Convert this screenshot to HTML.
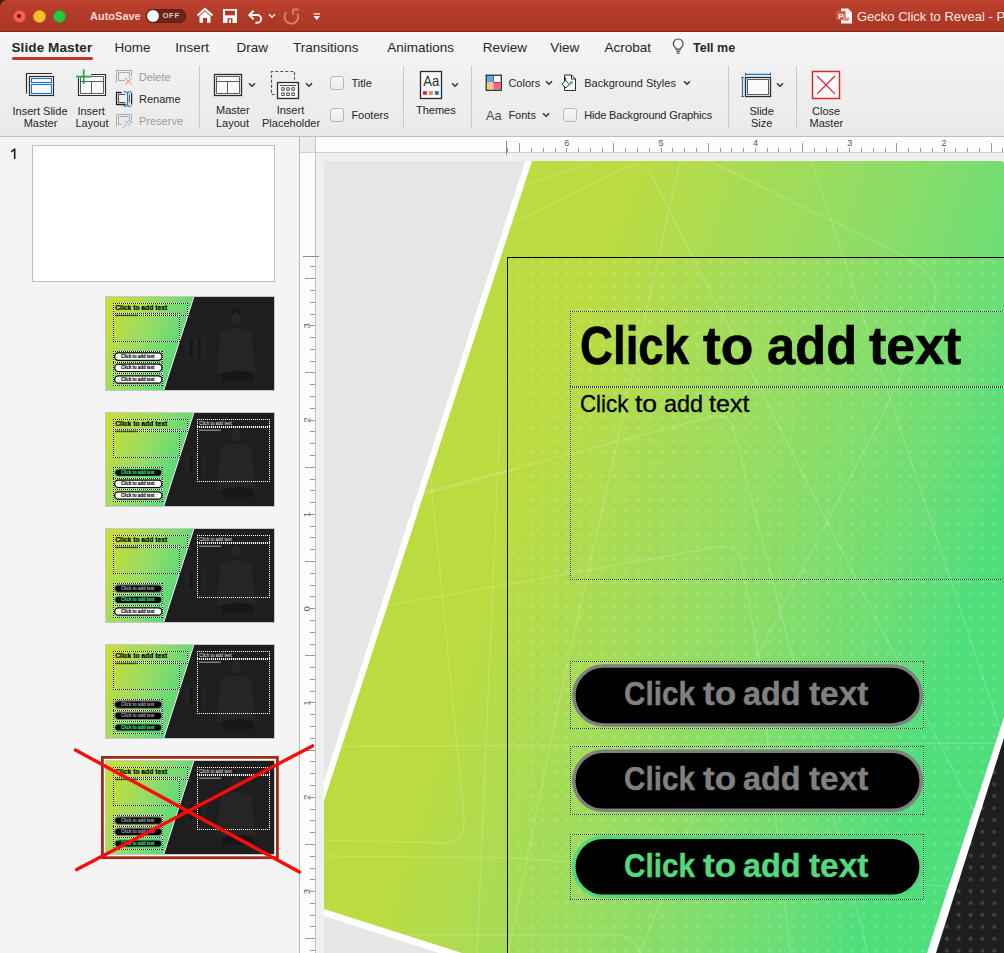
<!DOCTYPE html>
<html><head><meta charset="utf-8">
<style>
*{margin:0;padding:0;box-sizing:border-box}
html,body{width:1004px;height:953px;overflow:hidden;background:#f0f0f0;font-family:"Liberation Sans",sans-serif}
.a{position:absolute}
.t{position:absolute;white-space:nowrap;line-height:1}
svg{position:absolute;overflow:visible}
.rt{position:absolute;white-space:nowrap;line-height:1;font-size:11px;color:#262626}
.tab{position:absolute;white-space:nowrap;line-height:1;font-size:13.5px;color:#262626;top:41px}
</style></head><body>

<div class="a" style="left:0;top:0;width:1004px;height:32px;background:linear-gradient(#bc402d,#a83624);border-bottom:1px solid #8f2212"></div>
<svg style="left:0;top:0" width="8" height="8"><path d="M0 0H7A7 7 0 0 0 0 7Z" fill="#3a1a14"/></svg>
<div class="a" style="left:12.5px;top:9.5px;width:13px;height:13px;border-radius:50%;background:#fd5f57;border:0.8px solid #d9453d"></div>
<div class="a" style="left:32.5px;top:9.5px;width:13px;height:13px;border-radius:50%;background:#fdbc2e;border:0.8px solid #dc9c22"></div>
<div class="a" style="left:52.5px;top:9.5px;width:13px;height:13px;border-radius:50%;background:#27c83f;border:0.8px solid #1ca630"></div>
<div class="a" style="left:17px;top:14px;width:4px;height:4px;border-radius:50%;background:#4a0a06"></div>
<div class="t" style="left:90px;top:10.6px;font-size:11px;font-weight:bold;color:#f6d9d3">AutoSave</div>
<div class="a" style="left:146px;top:9px;width:40px;height:14px;border-radius:7px;background:#6b2419;box-shadow:inset 0 0 0 0.6px #561910"></div>
<div class="a" style="left:146.7px;top:10px;width:12px;height:12px;border-radius:50%;background:#f7f7f7;box-shadow:0 0 1px #3a0a05"></div>
<div class="t" style="left:162.4px;top:12.2px;font-size:7.8px;font-weight:bold;color:#e6c4bd;letter-spacing:0.6px;-webkit-font-smoothing:antialiased">OFF</div>
<svg style="left:196px;top:7px" width="18" height="17" viewBox="0 0 18 17"><path d="M1.6 8.6L9 1.8l7.4 6.8" fill="none" stroke="#fff" stroke-width="2"/><path d="M3.5 9.2L9 4.3l5.5 4.9V15.7H11V11H7V15.7H3.5z" fill="#fff"/></svg>
<svg style="left:222px;top:8px" width="16" height="16" viewBox="0 0 16 16"><path d="M1 1H15V15H1Z" fill="#fff"/><path d="M3 2.6H13V7.4H3Z" fill="#b63c2a"/><path d="M5.5 10.2H10.5V15H5.5Z" fill="#ad3624"/><path d="M7 11.6H9V15H7Z" fill="#fff"/></svg>
<svg style="left:247px;top:8.5px" width="18" height="15" viewBox="0 0 18 15"><path d="M2.5 6H10.2a3.9 3.9 0 0 1 0 7.8H8.4" fill="none" stroke="#fff" stroke-width="1.9"/><path d="M6.6 1.8L2.3 6l4.3 4.2" fill="none" stroke="#fff" stroke-width="1.9"/></svg>
<svg style="left:268px;top:13px" width="8" height="6" viewBox="0 0 8 6"><path d="M1 1.2l3 3 3-3" fill="none" stroke="#fff" stroke-width="1.4"/></svg>
<svg style="left:283px;top:8px" width="18" height="17" viewBox="0 0 18 17"><path d="M3.4 4.2A6.8 6.8 0 1 0 14.4 5.6" fill="none" stroke="#d8806f" stroke-width="1.9"/><path d="M10 6.6L10.3 1.5H15.6" fill="none" stroke="#d8806f" stroke-width="1.9"/></svg>
<svg style="left:312px;top:12px" width="10" height="10" viewBox="0 0 10 10"><rect x="1.5" y="1.2" width="6.5" height="1.4" fill="#f4d9d4"/><path d="M1.5 3.9h6.5L4.75 8.2z" fill="#fff"/></svg>
<svg style="left:836px;top:8px" width="17" height="16" viewBox="0 0 17 16"><path d="M5 0.5h7l4 4V15.5H5z" fill="#fbfbfb"/><path d="M12 0.5v4h4" fill="#d8d8d8"/><rect x="0.5" y="3" width="9" height="9" fill="#d35c44"/><text x="2.2" y="10.5" font-size="8" font-weight="bold" fill="#fff" font-family="Liberation Sans">P</text><path d="M10 6a3.5 3.5 0 1 0 3.5 3.5H10z" fill="#e58a74"/></svg>
<div class="t" style="left:857px;top:9.5px;font-size:13px;color:#fbe9e6">Gecko Click to Reveal - PowerPoint</div>
<div class="a" style="left:0;top:32px;width:1004px;height:105px;background:linear-gradient(#f6f6f6 0px,#f0f0f0 40px,#ebebeb 95px,#e8e8e8 104px);border-bottom:1px solid #bdbdbd"></div>
<div class="a" style="left:0;top:32px;width:1004px;height:1px;background:#fbfbfb"></div>
<div class="tab" style="left:11.5px;font-weight:bold;letter-spacing:0.1px;">Slide Master</div>
<div class="tab" style="left:114.5px;font-weight:normal;">Home</div>
<div class="tab" style="left:175.3px;font-weight:normal;">Insert</div>
<div class="tab" style="left:236.5px;font-weight:normal;">Draw</div>
<div class="tab" style="left:292.9px;font-weight:normal;">Transitions</div>
<div class="tab" style="left:387.2px;font-weight:normal;">Animations</div>
<div class="tab" style="left:482.7px;font-weight:normal;">Review</div>
<div class="tab" style="left:550.3px;font-weight:normal;">View</div>
<div class="tab" style="left:604.5px;font-weight:normal;">Acrobat</div>
<div class="tab" style="left:693.1px;font-weight:bold;transform:scaleX(0.925);transform-origin:0 0;">Tell me</div>
<div class="a" style="left:11.5px;top:57px;width:81px;height:3px;border-radius:1.5px;background:#b83b29"></div>
<svg style="left:671px;top:38px" width="14" height="17" viewBox="0 0 14 17"><path d="M5 11.2C5 9.3 2.3 8.4 2.3 5.9A4.9 4.9 0 0 1 12.1 5.9C12.1 8.4 9.4 9.3 9.4 11.2Z" fill="#f7f7f7" stroke="#454545" stroke-width="1.2"/><path d="M5.2 13.1H9.2M5.8 15.1H8.6" stroke="#454545" stroke-width="1.2"/></svg>
<svg style="left:22px;top:66px" width="40" height="34" viewBox="0 0 40 34"><path d="M4.5 27.5V7.5H30" fill="none" stroke="#2b2b2b" stroke-width="1.15"/><rect x="7.5" y="10.5" width="24" height="19" fill="#fafafa" stroke="#2b2b2b" stroke-width="1.15"/><rect x="9.5" y="12.5" width="20" height="4" fill="none" stroke="#1a73cc" stroke-width="1.1"/><rect x="9.5" y="18.5" width="20" height="9" fill="none" stroke="#1a73cc" stroke-width="1.1"/></svg>
<div class="rt" style="left:12.5px;top:105.6px;color:#262626">Insert Slide</div>
<div class="rt" style="left:23.7px;top:117.5px;color:#262626">Master</div>
<svg style="left:70px;top:66px" width="40" height="34" viewBox="0 0 40 34"><path d="M8.5 12V29.5H35.5V8.5H21" fill="#fafafa" stroke="#2b2b2b" stroke-width="1.15"/><path d="M10.5 10.5H33.5V27.5H10.5Z M10.5 15.5H33.5 M21.5 15.5V27.5" fill="none" stroke="#5c5c5c" stroke-width="1"/><path d="M13.7 3.2V18.1M6 10.6H21.5" stroke="#1ea542" stroke-width="1.6"/></svg>
<div class="rt" style="left:77.4px;top:105.6px;color:#262626">Insert</div>
<div class="rt" style="left:75.5px;top:117.5px;color:#262626">Layout</div>
<svg style="left:112px;top:66px" width="24" height="68" viewBox="0 0 24 68"><path d="M4.5 16.6V4.5H19.5V9.7" fill="none" stroke="#a9a9a9" stroke-width="1"/><path d="M12.8 14.5H6.5V6.5H17.5V12" fill="none" stroke="#a9a9a9" stroke-width="1"/><path d="M13.2 12.1L19.7 18.7M19.7 12.1L13.2 18.7" stroke="#eb9a9e" stroke-width="1.1"/><path d="M9.7 26.5H4.5V38.5H13.9" fill="none" stroke="#222" stroke-width="1.3"/><path d="M13.3 28.5H6.5V36.5H13.3" fill="none" stroke="#555" stroke-width="1"/><path d="M17.5 28.5V36.5" stroke="#555" stroke-width="1"/><path d="M19.6 27V38.5" stroke="#222" stroke-width="1.2"/><path d="M15.6 26.2V39.8M11.6 25.8Q15.6 25.4 15.6 27.6Q15.6 25.4 19.6 25.8M11.6 40.2Q15.6 40.6 15.6 38.4Q15.6 40.6 19.6 40.2" fill="none" stroke="#1a73cc" stroke-width="1.2"/><path d="M4.5 60.9V48.5H19.5V53.7" fill="none" stroke="#a9a9a9" stroke-width="1"/><path d="M10 58.5H6.5V50.5H17.5V53" fill="none" stroke="#a9a9a9" stroke-width="1"/><path d="M10.4 62.3L14.2 58.5M12.8 54.8L18.3 60.3M14.6 56.6L17.3 53.9L19.4 56L16.6 58.6M16.8 52.8L20.6 56.6" fill="none" stroke="#9cc6ea" stroke-width="1.1"/></svg>
<div class="rt" style="left:138.8px;top:72.0px;color:#9d9d9d">Delete</div>
<div class="rt" style="left:139px;top:94.0px;color:#262626">Rename</div>
<div class="rt" style="left:139px;top:116.0px;color:#9d9d9d">Preserve</div>
<div class="a" style="left:199px;top:66px;width:1px;height:62px;background:#c9c9c9"></div>
<svg style="left:208px;top:66px" width="40" height="34" viewBox="0 0 40 34"><rect x="6.5" y="8.5" width="27" height="21" fill="#fafafa" stroke="#2b2b2b" stroke-width="1.3"/><path d="M8.5 10.5H31.5V27.5H8.5Z M8.5 15.5H31.5 M19.5 15.5V27.5" fill="none" stroke="#5c5c5c" stroke-width="1"/></svg>
<svg style="left:248px;top:82px" width="8" height="6" viewBox="0 0 8 6"><path d="M1 1.2l3 3 3-3" fill="none" stroke="#333" stroke-width="1.5"/></svg>
<div class="rt" style="left:216px;top:105.4px;color:#262626">Master</div>
<div class="rt" style="left:216px;top:117.8px;color:#262626">Layout</div>
<svg style="left:265px;top:66px" width="40" height="36" viewBox="0 0 40 36"><path d="M9.7 28.5H6.5V5.5H29.5V13.5" fill="none" stroke="#505050" stroke-width="1.15" stroke-dasharray="3 2"/><rect x="12.5" y="16.5" width="21" height="16" fill="#fafafa" stroke="#2b2b2b" stroke-width="1.3"/><path d="M15 19.5H31" stroke="#505050" stroke-width="1"/><path d="M16.7 21.7h2.6v2.6h-2.6zM21.7 21.7h2.6v2.6h-2.6zM26.8 21.7h2.6v2.6h-2.6zM16.7 26.9h2.6v2.6h-2.6zM21.7 26.9h2.6v2.6h-2.6zM26.8 26.9h2.6v2.6h-2.6z" fill="none" stroke="#505050" stroke-width="1"/></svg>
<svg style="left:305px;top:82px" width="8" height="6" viewBox="0 0 8 6"><path d="M1 1.2l3 3 3-3" fill="none" stroke="#333" stroke-width="1.5"/></svg>
<div class="rt" style="left:276.7px;top:105.4px;color:#262626">Insert</div>
<div class="rt" style="left:262px;top:117.8px;color:#262626">Placeholder</div>
<div class="a" style="left:330px;top:76px;width:14px;height:14px;border-radius:3px;background:linear-gradient(#f8f8f8,#ececec);border:1px solid #b8b8b8"></div>
<div class="rt" style="left:351.4px;top:78.3px;color:#262626">Title</div>
<div class="a" style="left:330px;top:108px;width:14px;height:14px;border-radius:3px;background:linear-gradient(#f8f8f8,#ececec);border:1px solid #b8b8b8"></div>
<div class="rt" style="left:351.4px;top:110.2px;color:#262626">Footers</div>
<div class="a" style="left:402.7px;top:66px;width:1px;height:62px;background:#c9c9c9"></div>
<svg style="left:412px;top:66px" width="40" height="36" viewBox="0 0 40 36"><rect x="8.5" y="5.5" width="21" height="27" fill="#fafafa" stroke="#2b2b2b" stroke-width="1.3"/><text x="11.2" y="19.7" font-size="14.8" fill="#2b2b2b" font-family="Liberation Sans" textLength="16" lengthAdjust="spacingAndGlyphs">Aa</text><rect x="11.1" y="25.1" width="3.7" height="3.7" fill="#e0202a"/><rect x="17.1" y="25.1" width="3.7" height="3.7" fill="#f5862a"/><rect x="23" y="25.1" width="3.7" height="3.7" fill="#1b74c8"/></svg>
<svg style="left:451px;top:82px" width="8" height="6" viewBox="0 0 8 6"><path d="M1 1.2l3 3 3-3" fill="none" stroke="#333" stroke-width="1.5"/></svg>
<div class="rt" style="left:416px;top:105.4px;color:#262626">Themes</div>
<div class="a" style="left:471px;top:66px;width:1px;height:62px;background:#c9c9c9"></div>
<svg style="left:485px;top:74px" width="18" height="18" viewBox="0 0 18 18"><rect x="1.5" y="1.5" width="7" height="7" fill="#60a6e4"/><rect x="8.5" y="1.5" width="7" height="7" fill="#fafafa"/><rect x="1.5" y="8.5" width="7" height="7" fill="#f6cf7c"/><rect x="8.5" y="8.5" width="7" height="7" fill="#f06478"/><path d="M8.5 1.5V8.5" stroke="#1e5fb0" stroke-width="0.9"/><path d="M8.5 8.5H15.5" stroke="#d81f2a" stroke-width="0.9"/><rect x="1.2" y="1.2" width="15.1" height="15.1" fill="none" stroke="#222" stroke-width="1.2"/></svg>
<div class="rt" style="left:508.4px;top:77.8px;color:#262626">Colors</div>
<svg style="left:545px;top:80px" width="8" height="6" viewBox="0 0 8 6"><path d="M1 1.2l3 3 3-3" fill="none" stroke="#333" stroke-width="1.5"/></svg>
<svg style="left:561px;top:74px" width="17" height="18" viewBox="0 0 17 18"><path d="M3.5 1H10.5L14.5 5V16.5H3.5V13 M3.5 7V1" fill="#fbfbfb" stroke="#2b2b2b" stroke-width="1"/><path d="M10.5 1V5H14.5" fill="none" stroke="#2b2b2b" stroke-width="1"/><path d="M1 10.2L4.6 6.6L8.4 10.4L4.8 14z" fill="#fff" stroke="#2b2b2b" stroke-width="1"/><path d="M4.6 6.6V3.6" stroke="#2b2b2b" stroke-width="1"/><path d="M8 11.5L11 7.6M11 7.6L8.8 8.2M11 7.6L11.2 9.8" stroke="#2f87dc" stroke-width="1.1" fill="none"/></svg>
<div class="rt" style="left:584.2px;top:77.8px;color:#262626">Background Styles</div>
<svg style="left:683px;top:80px" width="8" height="6" viewBox="0 0 8 6"><path d="M1 1.2l3 3 3-3" fill="none" stroke="#333" stroke-width="1.5"/></svg>
<svg style="left:480px;top:100px" width="30" height="25"><text x="6" y="19.7" font-size="13.5" fill="#4a4a4a" font-family="Liberation Sans" textLength="15.5" lengthAdjust="spacingAndGlyphs">Aa</text></svg>
<div class="rt" style="left:508.4px;top:110.2px;color:#262626">Fonts</div>
<svg style="left:541.5px;top:112px" width="8" height="6" viewBox="0 0 8 6"><path d="M1 1.2l3 3 3-3" fill="none" stroke="#333" stroke-width="1.5"/></svg>
<div class="a" style="left:563px;top:108px;width:14px;height:14px;border-radius:3px;background:linear-gradient(#f8f8f8,#ececec);border:1px solid #b8b8b8"></div>
<div class="rt" style="left:584.2px;top:110.2px;letter-spacing:-0.15px">Hide Background Graphics</div>
<div class="a" style="left:728px;top:66px;width:1px;height:62px;background:#c9c9c9"></div>
<svg style="left:736px;top:66px" width="40" height="34" viewBox="0 0 40 34"><rect x="9.5" y="11.5" width="25" height="19" fill="#fafafa" stroke="#2b2b2b" stroke-width="1.3"/><rect x="11.5" y="13.5" width="21" height="15" fill="none" stroke="#5c5c5c" stroke-width="1"/><path d="M9.5 8.3H34.5M9.5 6.8V9.8M34.5 6.8V9.8M6.5 11.5V30.5M5 11.5H8M5 30.5H8" stroke="#1a73cc" stroke-width="1.2" fill="none"/></svg>
<svg style="left:776px;top:82px" width="8" height="6" viewBox="0 0 8 6"><path d="M1 1.2l3 3 3-3" fill="none" stroke="#333" stroke-width="1.5"/></svg>
<div class="rt" style="left:749.4px;top:106.0px;color:#262626">Slide</div>
<div class="rt" style="left:750.9px;top:118.2px;color:#262626">Size</div>
<div class="a" style="left:796.3px;top:66px;width:1px;height:62px;background:#c9c9c9"></div>
<svg style="left:811px;top:70px" width="30" height="30" viewBox="0 0 30 30"><rect x="1.5" y="1.5" width="27" height="27" fill="#fbfbfb" stroke="#e0282e" stroke-width="1.5"/><path d="M6.2 6L23.9 23.9M23.9 6L6.2 23.9" stroke="#e0282e" stroke-width="1.3"/></svg>
<div class="rt" style="left:812px;top:106.0px;color:#262626">Close</div>
<div class="rt" style="left:809.6px;top:118.2px;color:#262626">Master</div>
<div class="a" style="left:0;top:137px;width:299px;height:816px;background:#f4f4f4"></div>
<div class="a" style="left:299px;top:137px;width:1px;height:816px;background:#b8b8b8"></div>
<div class="a" style="left:300px;top:137px;width:15px;height:15px;background:linear-gradient(135deg,#f0f0f0,#e9e9e9)"></div>
<div class="a" style="left:315px;top:137px;width:689px;height:15px;background:#fcfcfc;border-left:1px solid #b8b8b8"></div>
<div class="a" style="left:300px;top:152px;width:704px;height:1px;background:#cfcfcf"></div>
<div class="a" style="left:300px;top:153px;width:15px;height:800px;background:#fcfcfc"></div>
<div class="a" style="left:315px;top:137px;width:1px;height:816px;background:#c4c4c4"></div>
<svg style="left:0;top:0" width="1004" height="953"><path d="M507.5 148V152 M519.5 143V152 M531.5 148V152 M543.5 148V152 M555.5 148V152 M566.5 148V152 M578.5 148V152 M590.5 148V152 M602.5 148V152 M613.5 143V152 M625.5 148V152 M637.5 148V152 M649.5 148V152 M661.5 148V152 M672.5 148V152 M684.5 148V152 M696.5 148V152 M708.5 143V152 M720.5 148V152 M731.5 148V152 M743.5 148V152 M755.5 148V152 M767.5 148V152 M778.5 148V152 M790.5 148V152 M802.5 143V152 M814.5 148V152 M826.5 148V152 M837.5 148V152 M849.5 148V152 M861.5 148V152 M873.5 148V152 M885.5 148V152 M896.5 143V152 M908.5 148V152 M920.5 148V152 M932.5 148V152 M944.5 148V152 M955.5 148V152 M967.5 148V152 M979.5 148V152 M991.5 143V152 M1002.5 148V152" stroke="#9a9a9a" stroke-width="1"/><path d="M506.5 141V155" stroke="#8a8a8a" stroke-width="1"/></svg>
<div class="t" style="left:564.3px;top:139px;font-size:9px;color:#555">6</div>
<div class="t" style="left:658.6px;top:139px;font-size:9px;color:#555">5</div>
<div class="t" style="left:752.9px;top:139px;font-size:9px;color:#555">4</div>
<div class="t" style="left:847.2px;top:139px;font-size:9px;color:#555">3</div>
<div class="t" style="left:941.5px;top:139px;font-size:9px;color:#555">2</div>
<svg style="left:0;top:0" width="1004" height="953"><path d="M310 266.5H315 M305 278.5H315 M310 290.5H315 M310 302.5H315 M310 314.5H315 M310 325.5H315 M310 337.5H315 M310 349.5H315 M310 361.5H315 M305 372.5H315 M310 384.5H315 M310 396.5H315 M310 408.5H315 M310 420.5H315 M310 431.5H315 M310 443.5H315 M310 455.5H315 M305 467.5H315 M310 479.5H315 M310 490.5H315 M310 502.5H315 M310 514.5H315 M310 526.5H315 M310 537.5H315 M310 549.5H315 M305 561.5H315 M310 573.5H315 M310 585.5H315 M310 596.5H315 M310 608.5H315 M310 620.5H315 M310 632.5H315 M310 644.5H315 M305 655.5H315 M310 667.5H315 M310 679.5H315 M310 691.5H315 M310 702.5H315 M310 714.5H315 M310 726.5H315 M310 738.5H315 M305 750.5H315 M310 761.5H315 M310 773.5H315 M310 785.5H315 M310 797.5H315 M310 809.5H315 M310 820.5H315 M310 832.5H315 M305 844.5H315 M310 856.5H315 M310 868.5H315 M310 879.5H315 M310 891.5H315 M310 903.5H315 M310 915.5H315 M310 926.5H315 M305 938.5H315 M310 950.5H315" stroke="#9a9a9a" stroke-width="1"/><path d="M303 256.5H319" stroke="#8a8a8a" stroke-width="1"/></svg>
<svg style="left:0;top:0" width="1004" height="953"><text transform="translate(309.6 325.8) rotate(-90)" text-anchor="middle" font-size="9" fill="#555" font-family="Liberation Sans">3</text><text transform="translate(309.6 420.1) rotate(-90)" text-anchor="middle" font-size="9" fill="#555" font-family="Liberation Sans">2</text><text transform="translate(309.6 514.4) rotate(-90)" text-anchor="middle" font-size="9" fill="#555" font-family="Liberation Sans">1</text><text transform="translate(309.6 608.7) rotate(-90)" text-anchor="middle" font-size="9" fill="#555" font-family="Liberation Sans">0</text><text transform="translate(309.6 703.0) rotate(-90)" text-anchor="middle" font-size="9" fill="#555" font-family="Liberation Sans">1</text><text transform="translate(309.6 797.3) rotate(-90)" text-anchor="middle" font-size="9" fill="#555" font-family="Liberation Sans">2</text><text transform="translate(309.6 891.6) rotate(-90)" text-anchor="middle" font-size="9" fill="#555" font-family="Liberation Sans">3</text></svg>
<div class="a" style="left:324px;top:161px;width:680px;height:792px;background:#e6e6e6"></div>
<svg style="left:0;top:0" width="1004" height="953" viewBox="0 0 1004 953"><defs><linearGradient id="g1" gradientUnits="userSpaceOnUse" x1="629" y1="161" x2="1068" y2="309" color-interpolation="linearRGB"><stop offset="0" stop-color="#bbdb40"/><stop offset="1" stop-color="#4fde7c"/></linearGradient><pattern id="dotsL" x="513.6" y="256.2" width="11.87" height="11.87" patternUnits="userSpaceOnUse"><circle cx="5.935" cy="5.935" r="1.9" fill="#ffffff" fill-opacity="0.135"/></pattern><pattern id="dotsD" x="513.6" y="256.2" width="11.87" height="11.87" patternUnits="userSpaceOnUse"><circle cx="5.935" cy="5.935" r="1.9" fill="#ffffff" fill-opacity="0.035"/></pattern><clipPath id="clipR"><rect x="507" y="257" width="500" height="700"/></clipPath></defs><path d="M525.4 161H1004V953H439L324 916V781Z" fill="#ffffff"/><path d="M532 161H1001L1004 162.5V953H462L324 909V801Z" fill="url(#g1)"/><clipPath id="clipG"><path d="M532 161H1001L1004 162.5V953H462L324 909V801Z"/></clipPath><g fill="none" stroke="#ffffff" stroke-opacity="0.17" stroke-width="1.4" clip-path="url(#clipG)"><path d="M524.6 185.4L600 160"/><path d="M505 227L625 168Q640 161 650 172L896.4 658.2L1004 870"/><path d="M680 161L555 720L508 953"/><path d="M709.8 161L904.6 256.6Q940 275 935.6 300L880 420L756 658.2L640 953"/><path d="M811.3 161L1004 740"/><path d="M395 500L707 418Q728 410 734 430L868 953"/><path d="M380.8 606.8L718 547Q740 543 742 565L759.4 661.6L790 953"/><path d="M425.6 493.7L520 468"/><path d="M425 420L464 816Q466 843 446 843L324 840"/><path d="M500 420L477 953"/><path d="M324 746.5L1004 743"/><path d="M326 856L508 857.7L1004 890"/><path d="M324 934.7L617.6 934.7Q634 936 640 953"/></g><path d="M927 953L1004 717V953Z" fill="#ffffff"/><path d="M936 953L1004 738V953Z" fill="#1e1e1e"/><g clip-path="url(#clipR)"><path d="M532 161H1004V953H462L324 909V801Z" fill="url(#dotsL)"/><path d="M936 953L1004 738V953Z" fill="url(#dotsD)"/></g><path d="M507.5 1000V257.5H1010" fill="none" stroke="#000" stroke-width="1"/><path d="M570 311.5H1011 M570 386.5H1011 M570.5 311V387 M1010.5 311V387" fill="none" stroke="#ffffff" stroke-opacity="0.6" stroke-width="1"/><path d="M570 311.5H1011 M570 386.5H1011 M570.5 311V387 M1010.5 311V387" fill="none" stroke="#333333" stroke-width="1" stroke-dasharray="1 1"/><path d="M570 387.5H1011 M570 579.5H1011 M570.5 387V580 M1010.5 387V580" fill="none" stroke="#ffffff" stroke-opacity="0.6" stroke-width="1"/><path d="M570 387.5H1011 M570 579.5H1011 M570.5 387V580 M1010.5 387V580" fill="none" stroke="#333333" stroke-width="1" stroke-dasharray="1 1"/><path d="M570 661.5H924 M570 728.5H924 M570.5 661V729 M923.5 661V729" fill="none" stroke="#ffffff" stroke-opacity="0.6" stroke-width="1"/><path d="M570 661.5H924 M570 728.5H924 M570.5 661V729 M923.5 661V729" fill="none" stroke="#333333" stroke-width="1" stroke-dasharray="1 1"/><path d="M570 746.5H924 M570 814.5H924 M570.5 746V815 M923.5 746V815" fill="none" stroke="#ffffff" stroke-opacity="0.6" stroke-width="1"/><path d="M570 746.5H924 M570 814.5H924 M570.5 746V815 M923.5 746V815" fill="none" stroke="#333333" stroke-width="1" stroke-dasharray="1 1"/><path d="M570 834.5H924 M570 899.5H924 M570.5 834V900 M923.5 834V900" fill="none" stroke="#ffffff" stroke-opacity="0.6" stroke-width="1"/><path d="M570 834.5H924 M570 899.5H924 M570.5 834V900 M923.5 834V900" fill="none" stroke="#333333" stroke-width="1" stroke-dasharray="1 1"/><rect x="573.8" y="666" width="347.4000000000001" height="59" rx="29.5" fill="#000" stroke="#808080" stroke-width="3.5"/><rect x="573.8" y="751.2" width="347.4000000000001" height="59.09999999999991" rx="29.549999999999955" fill="#000" stroke="#808080" stroke-width="3.5"/><rect x="573.8" y="837.2" width="347.4000000000001" height="59.09999999999991" rx="29.549999999999955" fill="#000" stroke="#4fd97c" stroke-width="3.5"/></svg>
<div class="t" style="left:579.77px;top:319.19px;font-size:53.40px;font-weight:bold;color:#000;transform:scaleX(0.8552);transform-origin:0 0;-webkit-text-stroke:0.64px #000;">Click</div>
<div class="t" style="left:702.57px;top:319.19px;font-size:53.40px;font-weight:bold;color:#000;transform:scaleX(0.9996);transform-origin:0 0;-webkit-text-stroke:0.64px #000;">to</div>
<div class="t" style="left:766.69px;top:319.19px;font-size:53.40px;font-weight:bold;color:#000;transform:scaleX(0.9501);transform-origin:0 0;-webkit-text-stroke:0.64px #000;">add</div>
<div class="t" style="left:869.08px;top:319.19px;font-size:53.40px;font-weight:bold;color:#000;transform:scaleX(0.9717);transform-origin:0 0;-webkit-text-stroke:0.64px #000;">text</div>
<div class="t" style="left:580.18px;top:393.06px;font-size:23.20px;font-weight:normal;color:#000;transform:scaleX(0.9628);transform-origin:0 0;-webkit-text-stroke:0.3px #000;">Click</div>
<div class="t" style="left:634.93px;top:393.06px;font-size:23.20px;font-weight:normal;color:#000;transform:scaleX(1.1435);transform-origin:0 0;-webkit-text-stroke:0.3px #000;">to</div>
<div class="t" style="left:663.56px;top:393.06px;font-size:23.20px;font-weight:normal;color:#000;transform:scaleX(1.0088);transform-origin:0 0;-webkit-text-stroke:0.3px #000;">add</div>
<div class="t" style="left:709.05px;top:393.06px;font-size:23.20px;font-weight:normal;color:#000;transform:scaleX(1.0830);transform-origin:0 0;-webkit-text-stroke:0.3px #000;">text</div>
<div class="t" style="left:623.71px;top:676.85px;font-size:33.60px;font-weight:bold;color:#808080;transform:scaleX(0.8838);transform-origin:0 0;-webkit-text-stroke:0.40px #808080;">Click</div>
<div class="t" style="left:702.55px;top:676.85px;font-size:33.60px;font-weight:bold;color:#808080;transform:scaleX(1.0448);transform-origin:0 0;-webkit-text-stroke:0.40px #808080;">to</div>
<div class="t" style="left:743.05px;top:676.85px;font-size:33.60px;font-weight:bold;color:#808080;transform:scaleX(0.9646);transform-origin:0 0;-webkit-text-stroke:0.40px #808080;">add</div>
<div class="t" style="left:808.77px;top:676.85px;font-size:33.60px;font-weight:bold;color:#808080;transform:scaleX(0.9930);transform-origin:0 0;-webkit-text-stroke:0.40px #808080;">text</div>
<div class="t" style="left:623.71px;top:762.45px;font-size:33.60px;font-weight:bold;color:#808080;transform:scaleX(0.8838);transform-origin:0 0;-webkit-text-stroke:0.40px #808080;">Click</div>
<div class="t" style="left:702.55px;top:762.45px;font-size:33.60px;font-weight:bold;color:#808080;transform:scaleX(1.0448);transform-origin:0 0;-webkit-text-stroke:0.40px #808080;">to</div>
<div class="t" style="left:743.05px;top:762.45px;font-size:33.60px;font-weight:bold;color:#808080;transform:scaleX(0.9646);transform-origin:0 0;-webkit-text-stroke:0.40px #808080;">add</div>
<div class="t" style="left:808.77px;top:762.45px;font-size:33.60px;font-weight:bold;color:#808080;transform:scaleX(0.9930);transform-origin:0 0;-webkit-text-stroke:0.40px #808080;">text</div>
<div class="t" style="left:623.71px;top:849.35px;font-size:33.60px;font-weight:bold;color:#52d97c;transform:scaleX(0.8838);transform-origin:0 0;-webkit-text-stroke:0.40px #52d97c;">Click</div>
<div class="t" style="left:702.55px;top:849.35px;font-size:33.60px;font-weight:bold;color:#52d97c;transform:scaleX(1.0448);transform-origin:0 0;-webkit-text-stroke:0.40px #52d97c;">to</div>
<div class="t" style="left:743.05px;top:849.35px;font-size:33.60px;font-weight:bold;color:#52d97c;transform:scaleX(0.9646);transform-origin:0 0;-webkit-text-stroke:0.40px #52d97c;">add</div>
<div class="t" style="left:808.77px;top:849.35px;font-size:33.60px;font-weight:bold;color:#52d97c;transform:scaleX(0.9930);transform-origin:0 0;-webkit-text-stroke:0.40px #52d97c;">text</div>
<svg style="left:0;top:0" width="1004" height="953" viewBox="0 0 1004 953"><defs><linearGradient id="tg" x1="4" y1="20" x2="82" y2="52" gradientUnits="userSpaceOnUse"><stop offset="0" stop-color="#c5dd39"/><stop offset="0.5" stop-color="#95dc66"/><stop offset="1" stop-color="#4ed97c"/></linearGradient></defs><rect x="32.5" y="145.5" width="242" height="136" fill="#ffffff" stroke="#bdbdbd" stroke-width="1"/><g transform="translate(105,296)"><rect x="0.5" y="0.5" width="169" height="94" fill="#1e1e1e" stroke="#c8c8c8" stroke-width="1"/><path d="M116 35q15-6 30 0l5 43h-40z" fill="#252525"/><ellipse cx="131" cy="23" rx="4.6" ry="6.2" fill="#262626"/><path d="M126 19q5-8.5 10 0v-3.5q-5-5.5-10 0z" fill="#131313"/><path d="M117 77q14-4 32 0v8h-32z" fill="#171717"/><path d="M80 42h22v22h-22z" fill="#222"/><path d="M84 44h4v18h-4zM93 43h3v20h-3z" fill="#181818"/><path d="M1 1H88.5L58.5 94H1Z" fill="url(#tg)"/><path d="M88.8 1L58.8 94" stroke="#ffffff" stroke-width="1"/><path d="M8 7.5H83 M8 19.5H83 M8.5 7V20 M82.5 7V20" fill="none" stroke="#ffffff" stroke-width="1"/><path d="M8 7.5H83 M8 19.5H83 M8.5 7V20 M82.5 7V20" fill="none" stroke="#1a1a1a" stroke-width="1" stroke-dasharray="1 1"/><path d="M8 17.5H75 M8 45.5H75 M8.5 17V46 M74.5 17V46" fill="none" stroke="#ffffff" stroke-width="1"/><path d="M8 17.5H75 M8 45.5H75 M8.5 17V46 M74.5 17V46" fill="none" stroke="#1a1a1a" stroke-width="1" stroke-dasharray="1 1"/><text x="10.2" y="14.2" font-family="Liberation Sans" font-weight="bold" font-size="7.4" textLength="52" lengthAdjust="spacingAndGlyphs" fill="#000" stroke="#000" stroke-width="0.2">Click to add text</text><rect x="10" y="18.6" width="23" height="1.6" fill="#222" opacity="0.7"/><path d="M8 55.5H58 M8 89.5H58 M8.5 55V90 M57.5 55V90" fill="none" stroke="#ffffff" stroke-width="1"/><path d="M8 55.5H58 M8 89.5H58 M8.5 55V90 M57.5 55V90" fill="none" stroke="#1a1a1a" stroke-width="1" stroke-dasharray="1 1"/><path d="M8 66.5H58M8 77.5H58" fill="none" stroke="#ffffff" stroke-width="1"/><path d="M8 66.5H58M8 77.5H58" fill="none" stroke="#1a1a1a" stroke-width="1" stroke-dasharray="1 1"/><rect x="9.7" y="56.9" width="47.3" height="7.4" rx="3.7" fill="#ffffff" stroke="#000" stroke-width="1.2"/><text x="16" y="62.1" font-family="Liberation Sans" font-weight="bold" font-size="5.4" textLength="33.5" lengthAdjust="spacingAndGlyphs" fill="#000" stroke="#000" stroke-width="0.15">Click to add text</text><rect x="9.7" y="68.10000000000001" width="47.3" height="7.4" rx="3.7" fill="#ffffff" stroke="#000" stroke-width="1.2"/><text x="16" y="73.3" font-family="Liberation Sans" font-weight="bold" font-size="5.4" textLength="33.5" lengthAdjust="spacingAndGlyphs" fill="#000" stroke="#000" stroke-width="0.15">Click to add text</text><rect x="9.7" y="79.80000000000001" width="47.3" height="7.4" rx="3.7" fill="#ffffff" stroke="#000" stroke-width="1.2"/><text x="16" y="85.0" font-family="Liberation Sans" font-weight="bold" font-size="5.4" textLength="33.5" lengthAdjust="spacingAndGlyphs" fill="#000" stroke="#000" stroke-width="0.15">Click to add text</text></g><g transform="translate(105,412)"><rect x="0.5" y="0.5" width="169" height="94" fill="#1e1e1e" stroke="#c8c8c8" stroke-width="1"/><path d="M116 35q15-6 30 0l5 43h-40z" fill="#252525"/><ellipse cx="131" cy="23" rx="4.6" ry="6.2" fill="#262626"/><path d="M126 19q5-8.5 10 0v-3.5q-5-5.5-10 0z" fill="#131313"/><path d="M117 77q14-4 32 0v8h-32z" fill="#171717"/><path d="M80 42h22v22h-22z" fill="#222"/><path d="M84 44h4v18h-4zM93 43h3v20h-3z" fill="#181818"/><path d="M1 1H88.5L58.5 94H1Z" fill="url(#tg)"/><path d="M88.8 1L58.8 94" stroke="#ffffff" stroke-width="1"/><path d="M8 7.5H83 M8 19.5H83 M8.5 7V20 M82.5 7V20" fill="none" stroke="#ffffff" stroke-width="1"/><path d="M8 7.5H83 M8 19.5H83 M8.5 7V20 M82.5 7V20" fill="none" stroke="#1a1a1a" stroke-width="1" stroke-dasharray="1 1"/><path d="M8 17.5H75 M8 45.5H75 M8.5 17V46 M74.5 17V46" fill="none" stroke="#ffffff" stroke-width="1"/><path d="M8 17.5H75 M8 45.5H75 M8.5 17V46 M74.5 17V46" fill="none" stroke="#1a1a1a" stroke-width="1" stroke-dasharray="1 1"/><text x="10.2" y="14.2" font-family="Liberation Sans" font-weight="bold" font-size="7.4" textLength="52" lengthAdjust="spacingAndGlyphs" fill="#000" stroke="#000" stroke-width="0.2">Click to add text</text><rect x="10" y="18.6" width="23" height="1.6" fill="#222" opacity="0.7"/><path d="M8 55.5H58 M8 89.5H58 M8.5 55V90 M57.5 55V90" fill="none" stroke="#ffffff" stroke-width="1"/><path d="M8 55.5H58 M8 89.5H58 M8.5 55V90 M57.5 55V90" fill="none" stroke="#1a1a1a" stroke-width="1" stroke-dasharray="1 1"/><path d="M8 66.5H58M8 77.5H58" fill="none" stroke="#ffffff" stroke-width="1"/><path d="M8 66.5H58M8 77.5H58" fill="none" stroke="#1a1a1a" stroke-width="1" stroke-dasharray="1 1"/><rect x="9.7" y="56.9" width="47.3" height="7.4" rx="3.7" fill="#000" stroke="#4cd97b" stroke-width="1.2"/><text x="16" y="62.1" font-family="Liberation Sans" font-weight="bold" font-size="5.4" textLength="33.5" lengthAdjust="spacingAndGlyphs" fill="#4cd97b" stroke="#4cd97b" stroke-width="0.15">Click to add text</text><rect x="9.7" y="68.10000000000001" width="47.3" height="7.4" rx="3.7" fill="#ffffff" stroke="#000" stroke-width="1.2"/><text x="16" y="73.3" font-family="Liberation Sans" font-weight="bold" font-size="5.4" textLength="33.5" lengthAdjust="spacingAndGlyphs" fill="#000" stroke="#000" stroke-width="0.15">Click to add text</text><rect x="9.7" y="79.80000000000001" width="47.3" height="7.4" rx="3.7" fill="#ffffff" stroke="#000" stroke-width="1.2"/><text x="16" y="85.0" font-family="Liberation Sans" font-weight="bold" font-size="5.4" textLength="33.5" lengthAdjust="spacingAndGlyphs" fill="#000" stroke="#000" stroke-width="0.15">Click to add text</text><path d="M92 7.5H165 M92 69.5H165 M92.5 7V70 M164.5 7V70" fill="none" stroke="#333" stroke-width="1"/><path d="M92 7.5H165 M92 69.5H165 M92.5 7V70 M164.5 7V70" fill="none" stroke="#ffffff" stroke-width="1" stroke-dasharray="1 1"/><path d="M92 14.5H165M92 15.5H165" fill="none" stroke="#333" stroke-width="1"/><path d="M92 14.5H165M92 15.5H165" fill="none" stroke="#ffffff" stroke-width="1" stroke-dasharray="1 1"/><text x="94.3" y="12.6" font-family="Liberation Sans" font-size="4.6" textLength="32.5" lengthAdjust="spacingAndGlyphs" fill="#e8e8e8">Click to add text</text><rect x="94" y="17.6" width="22" height="1.3" fill="#cfcfcf" opacity="0.6"/></g><g transform="translate(105,528)"><rect x="0.5" y="0.5" width="169" height="94" fill="#1e1e1e" stroke="#c8c8c8" stroke-width="1"/><path d="M116 35q15-6 30 0l5 43h-40z" fill="#252525"/><ellipse cx="131" cy="23" rx="4.6" ry="6.2" fill="#262626"/><path d="M126 19q5-8.5 10 0v-3.5q-5-5.5-10 0z" fill="#131313"/><path d="M117 77q14-4 32 0v8h-32z" fill="#171717"/><path d="M80 42h22v22h-22z" fill="#222"/><path d="M84 44h4v18h-4zM93 43h3v20h-3z" fill="#181818"/><path d="M1 1H88.5L58.5 94H1Z" fill="url(#tg)"/><path d="M88.8 1L58.8 94" stroke="#ffffff" stroke-width="1"/><path d="M8 7.5H83 M8 19.5H83 M8.5 7V20 M82.5 7V20" fill="none" stroke="#ffffff" stroke-width="1"/><path d="M8 7.5H83 M8 19.5H83 M8.5 7V20 M82.5 7V20" fill="none" stroke="#1a1a1a" stroke-width="1" stroke-dasharray="1 1"/><path d="M8 17.5H75 M8 45.5H75 M8.5 17V46 M74.5 17V46" fill="none" stroke="#ffffff" stroke-width="1"/><path d="M8 17.5H75 M8 45.5H75 M8.5 17V46 M74.5 17V46" fill="none" stroke="#1a1a1a" stroke-width="1" stroke-dasharray="1 1"/><text x="10.2" y="14.2" font-family="Liberation Sans" font-weight="bold" font-size="7.4" textLength="52" lengthAdjust="spacingAndGlyphs" fill="#000" stroke="#000" stroke-width="0.2">Click to add text</text><rect x="10" y="18.6" width="23" height="1.6" fill="#222" opacity="0.7"/><path d="M8 55.5H58 M8 89.5H58 M8.5 55V90 M57.5 55V90" fill="none" stroke="#ffffff" stroke-width="1"/><path d="M8 55.5H58 M8 89.5H58 M8.5 55V90 M57.5 55V90" fill="none" stroke="#1a1a1a" stroke-width="1" stroke-dasharray="1 1"/><path d="M8 66.5H58M8 77.5H58" fill="none" stroke="#ffffff" stroke-width="1"/><path d="M8 66.5H58M8 77.5H58" fill="none" stroke="#1a1a1a" stroke-width="1" stroke-dasharray="1 1"/><rect x="9.7" y="56.9" width="47.3" height="7.4" rx="3.7" fill="#000" stroke="#7a7a7a" stroke-width="1.2"/><text x="16" y="62.1" font-family="Liberation Sans" font-weight="bold" font-size="5.4" textLength="33.5" lengthAdjust="spacingAndGlyphs" fill="#9a9a9a" stroke="#9a9a9a" stroke-width="0.15">Click to add text</text><rect x="9.7" y="68.10000000000001" width="47.3" height="7.4" rx="3.7" fill="#000" stroke="#4cd97b" stroke-width="1.2"/><text x="16" y="73.3" font-family="Liberation Sans" font-weight="bold" font-size="5.4" textLength="33.5" lengthAdjust="spacingAndGlyphs" fill="#4cd97b" stroke="#4cd97b" stroke-width="0.15">Click to add text</text><rect x="9.7" y="79.80000000000001" width="47.3" height="7.4" rx="3.7" fill="#ffffff" stroke="#000" stroke-width="1.2"/><text x="16" y="85.0" font-family="Liberation Sans" font-weight="bold" font-size="5.4" textLength="33.5" lengthAdjust="spacingAndGlyphs" fill="#000" stroke="#000" stroke-width="0.15">Click to add text</text><path d="M92 7.5H165 M92 69.5H165 M92.5 7V70 M164.5 7V70" fill="none" stroke="#333" stroke-width="1"/><path d="M92 7.5H165 M92 69.5H165 M92.5 7V70 M164.5 7V70" fill="none" stroke="#ffffff" stroke-width="1" stroke-dasharray="1 1"/><path d="M92 14.5H165M92 15.5H165" fill="none" stroke="#333" stroke-width="1"/><path d="M92 14.5H165M92 15.5H165" fill="none" stroke="#ffffff" stroke-width="1" stroke-dasharray="1 1"/><text x="94.3" y="12.6" font-family="Liberation Sans" font-size="4.6" textLength="32.5" lengthAdjust="spacingAndGlyphs" fill="#e8e8e8">Click to add text</text><rect x="94" y="17.6" width="22" height="1.3" fill="#cfcfcf" opacity="0.6"/></g><g transform="translate(105,644)"><rect x="0.5" y="0.5" width="169" height="94" fill="#1e1e1e" stroke="#c8c8c8" stroke-width="1"/><path d="M116 35q15-6 30 0l5 43h-40z" fill="#252525"/><ellipse cx="131" cy="23" rx="4.6" ry="6.2" fill="#262626"/><path d="M126 19q5-8.5 10 0v-3.5q-5-5.5-10 0z" fill="#131313"/><path d="M117 77q14-4 32 0v8h-32z" fill="#171717"/><path d="M80 42h22v22h-22z" fill="#222"/><path d="M84 44h4v18h-4zM93 43h3v20h-3z" fill="#181818"/><path d="M1 1H88.5L58.5 94H1Z" fill="url(#tg)"/><path d="M88.8 1L58.8 94" stroke="#ffffff" stroke-width="1"/><path d="M8 7.5H83 M8 19.5H83 M8.5 7V20 M82.5 7V20" fill="none" stroke="#ffffff" stroke-width="1"/><path d="M8 7.5H83 M8 19.5H83 M8.5 7V20 M82.5 7V20" fill="none" stroke="#1a1a1a" stroke-width="1" stroke-dasharray="1 1"/><path d="M8 17.5H75 M8 45.5H75 M8.5 17V46 M74.5 17V46" fill="none" stroke="#ffffff" stroke-width="1"/><path d="M8 17.5H75 M8 45.5H75 M8.5 17V46 M74.5 17V46" fill="none" stroke="#1a1a1a" stroke-width="1" stroke-dasharray="1 1"/><text x="10.2" y="14.2" font-family="Liberation Sans" font-weight="bold" font-size="7.4" textLength="52" lengthAdjust="spacingAndGlyphs" fill="#000" stroke="#000" stroke-width="0.2">Click to add text</text><rect x="10" y="18.6" width="23" height="1.6" fill="#222" opacity="0.7"/><path d="M8 55.5H58 M8 89.5H58 M8.5 55V90 M57.5 55V90" fill="none" stroke="#ffffff" stroke-width="1"/><path d="M8 55.5H58 M8 89.5H58 M8.5 55V90 M57.5 55V90" fill="none" stroke="#1a1a1a" stroke-width="1" stroke-dasharray="1 1"/><path d="M8 66.5H58M8 77.5H58" fill="none" stroke="#ffffff" stroke-width="1"/><path d="M8 66.5H58M8 77.5H58" fill="none" stroke="#1a1a1a" stroke-width="1" stroke-dasharray="1 1"/><rect x="9.7" y="56.9" width="47.3" height="7.4" rx="3.7" fill="#000" stroke="#7a7a7a" stroke-width="1.2"/><text x="16" y="62.1" font-family="Liberation Sans" font-weight="bold" font-size="5.4" textLength="33.5" lengthAdjust="spacingAndGlyphs" fill="#9a9a9a" stroke="#9a9a9a" stroke-width="0.15">Click to add text</text><rect x="9.7" y="68.10000000000001" width="47.3" height="7.4" rx="3.7" fill="#000" stroke="#7a7a7a" stroke-width="1.2"/><text x="16" y="73.3" font-family="Liberation Sans" font-weight="bold" font-size="5.4" textLength="33.5" lengthAdjust="spacingAndGlyphs" fill="#9a9a9a" stroke="#9a9a9a" stroke-width="0.15">Click to add text</text><rect x="9.7" y="79.80000000000001" width="47.3" height="7.4" rx="3.7" fill="#000" stroke="#4cd97b" stroke-width="1.2"/><text x="16" y="85.0" font-family="Liberation Sans" font-weight="bold" font-size="5.4" textLength="33.5" lengthAdjust="spacingAndGlyphs" fill="#4cd97b" stroke="#4cd97b" stroke-width="0.15">Click to add text</text><path d="M92 7.5H165 M92 69.5H165 M92.5 7V70 M164.5 7V70" fill="none" stroke="#333" stroke-width="1"/><path d="M92 7.5H165 M92 69.5H165 M92.5 7V70 M164.5 7V70" fill="none" stroke="#ffffff" stroke-width="1" stroke-dasharray="1 1"/><path d="M92 14.5H165M92 15.5H165" fill="none" stroke="#333" stroke-width="1"/><path d="M92 14.5H165M92 15.5H165" fill="none" stroke="#ffffff" stroke-width="1" stroke-dasharray="1 1"/><text x="94.3" y="12.6" font-family="Liberation Sans" font-size="4.6" textLength="32.5" lengthAdjust="spacingAndGlyphs" fill="#e8e8e8">Click to add text</text><rect x="94" y="17.6" width="22" height="1.3" fill="#cfcfcf" opacity="0.6"/></g><rect x="102.4" y="757.4" width="175" height="100.3" fill="#ffffff" stroke="#a32a17" stroke-width="2.8"/><g transform="translate(105,760)"><rect x="0.5" y="0.5" width="169" height="94" fill="#1e1e1e" stroke="#c8c8c8" stroke-width="1"/><path d="M116 35q15-6 30 0l5 43h-40z" fill="#252525"/><ellipse cx="131" cy="23" rx="4.6" ry="6.2" fill="#262626"/><path d="M126 19q5-8.5 10 0v-3.5q-5-5.5-10 0z" fill="#131313"/><path d="M117 77q14-4 32 0v8h-32z" fill="#171717"/><path d="M80 42h22v22h-22z" fill="#222"/><path d="M84 44h4v18h-4zM93 43h3v20h-3z" fill="#181818"/><path d="M1 1H88.5L58.5 94H1Z" fill="url(#tg)"/><path d="M88.8 1L58.8 94" stroke="#ffffff" stroke-width="1"/><path d="M8 7.5H83 M8 19.5H83 M8.5 7V20 M82.5 7V20" fill="none" stroke="#ffffff" stroke-width="1"/><path d="M8 7.5H83 M8 19.5H83 M8.5 7V20 M82.5 7V20" fill="none" stroke="#1a1a1a" stroke-width="1" stroke-dasharray="1 1"/><path d="M8 17.5H75 M8 45.5H75 M8.5 17V46 M74.5 17V46" fill="none" stroke="#ffffff" stroke-width="1"/><path d="M8 17.5H75 M8 45.5H75 M8.5 17V46 M74.5 17V46" fill="none" stroke="#1a1a1a" stroke-width="1" stroke-dasharray="1 1"/><text x="10.2" y="14.2" font-family="Liberation Sans" font-weight="bold" font-size="7.4" textLength="52" lengthAdjust="spacingAndGlyphs" fill="#000" stroke="#000" stroke-width="0.2">Click to add text</text><rect x="10" y="18.6" width="23" height="1.6" fill="#222" opacity="0.7"/><path d="M8 55.5H58 M8 89.5H58 M8.5 55V90 M57.5 55V90" fill="none" stroke="#ffffff" stroke-width="1"/><path d="M8 55.5H58 M8 89.5H58 M8.5 55V90 M57.5 55V90" fill="none" stroke="#1a1a1a" stroke-width="1" stroke-dasharray="1 1"/><path d="M8 66.5H58M8 77.5H58" fill="none" stroke="#ffffff" stroke-width="1"/><path d="M8 66.5H58M8 77.5H58" fill="none" stroke="#1a1a1a" stroke-width="1" stroke-dasharray="1 1"/><rect x="9.7" y="56.9" width="47.3" height="7.4" rx="3.7" fill="#000" stroke="#7a7a7a" stroke-width="1.2"/><text x="16" y="62.1" font-family="Liberation Sans" font-weight="bold" font-size="5.4" textLength="33.5" lengthAdjust="spacingAndGlyphs" fill="#9a9a9a" stroke="#9a9a9a" stroke-width="0.15">Click to add text</text><rect x="9.7" y="68.10000000000001" width="47.3" height="7.4" rx="3.7" fill="#000" stroke="#7a7a7a" stroke-width="1.2"/><text x="16" y="73.3" font-family="Liberation Sans" font-weight="bold" font-size="5.4" textLength="33.5" lengthAdjust="spacingAndGlyphs" fill="#9a9a9a" stroke="#9a9a9a" stroke-width="0.15">Click to add text</text><rect x="9.7" y="79.80000000000001" width="47.3" height="7.4" rx="3.7" fill="#000" stroke="#4cd97b" stroke-width="1.2"/><text x="16" y="85.0" font-family="Liberation Sans" font-weight="bold" font-size="5.4" textLength="33.5" lengthAdjust="spacingAndGlyphs" fill="#4cd97b" stroke="#4cd97b" stroke-width="0.15">Click to add text</text><path d="M92 7.5H165 M92 69.5H165 M92.5 7V70 M164.5 7V70" fill="none" stroke="#333" stroke-width="1"/><path d="M92 7.5H165 M92 69.5H165 M92.5 7V70 M164.5 7V70" fill="none" stroke="#ffffff" stroke-width="1" stroke-dasharray="1 1"/><path d="M92 14.5H165M92 15.5H165" fill="none" stroke="#333" stroke-width="1"/><path d="M92 14.5H165M92 15.5H165" fill="none" stroke="#ffffff" stroke-width="1" stroke-dasharray="1 1"/><text x="94.3" y="12.6" font-family="Liberation Sans" font-size="4.6" textLength="32.5" lengthAdjust="spacingAndGlyphs" fill="#e8e8e8">Click to add text</text><rect x="94" y="17.6" width="22" height="1.3" fill="#cfcfcf" opacity="0.6"/></g><path d="M75.5 750L299.5 872M76.8 869.6L312.5 745.9" stroke="#fe0a0a" stroke-width="3.4" stroke-linecap="round"/></svg>
<svg style="left:0;top:140px" width="30" height="25"><path d="M11.2 11.9L14.7 9.1V19" fill="none" stroke="#1a1a1a" stroke-width="1.55" stroke-linejoin="round"/></svg>
</body></html>
